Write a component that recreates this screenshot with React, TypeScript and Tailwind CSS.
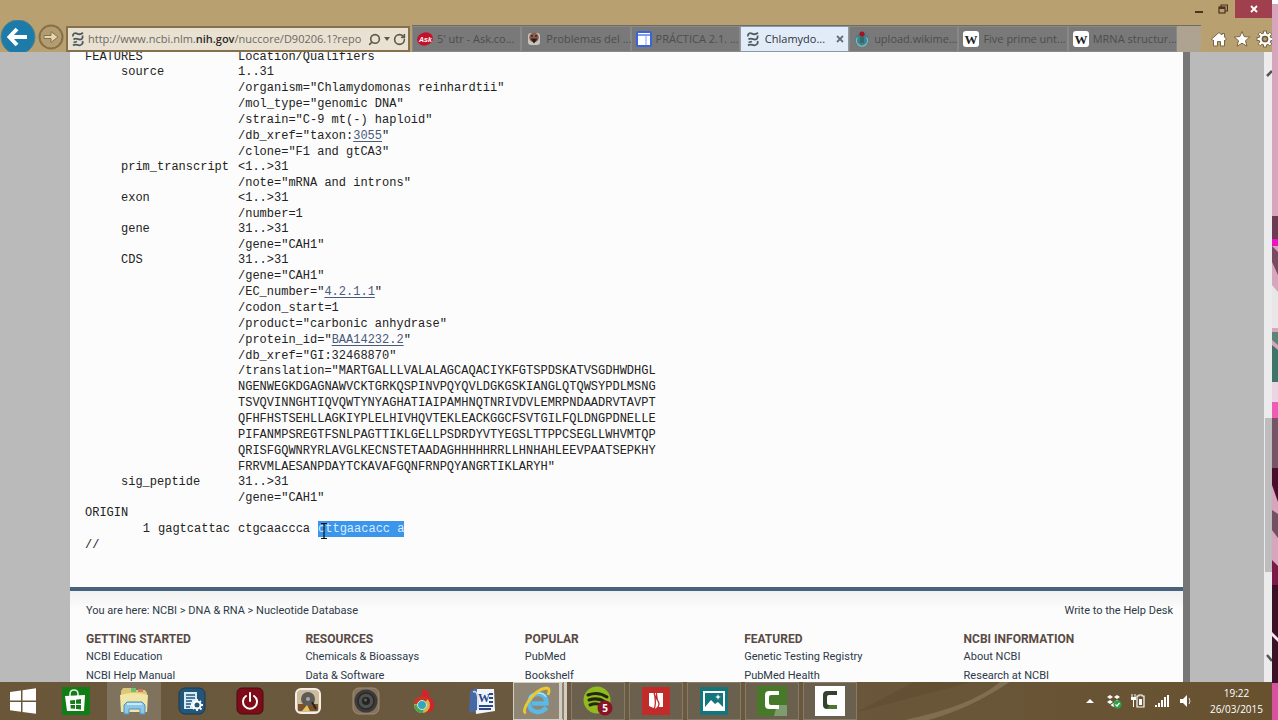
import { useState } from 'react';
import type { ReactNode } from 'react';
import { RotateCw, Search } from 'lucide-react';

interface Tab {
  id: number;
  title: string;
  icon: ReactNode;
  active?: boolean;
}

interface Feature {
  name: string;
  location: string;
  qualifiers: ReactNode[];
}

const PAGE_URL = 'http://www.ncbi.nlm.nih.gov/nuccore/D90206.1?report=genbank';

/* ---------- Icons ---------- */

function NcbiIcon() {
  return (
    <svg viewBox="0 0 16 16" className="size-4 shrink-0" fill="none" stroke="#4f5a5e" strokeWidth="1.8">
      <path d="M3 5.5C2.5 2.5 5 1.5 7 2.6S10.500 3.800 13 1.800" />
      <path d="M3.500 8.500C6 6.500 8 8.600 10 8.500S13 7 12.500 4.500" />
      <path d="M3 14.500C5.500 12.500 7.500 14.500 9.500 14.300S13.500 12.500 12.500 10" />
      <path d="M3.500 11.500L7 10.500" />
    </svg>
  );
}

function AskIcon() {
  return (
    <svg viewBox="0 0 16 16" className="size-4 shrink-0">
      <ellipse cx="8" cy="8" rx="8" ry="6.500" fill="#c3112d" transform="rotate(-15 8 8)" />
      <text x="2" y="11" fontSize="7" fontWeight="bold" fontStyle="italic" fill="#fff" fontFamily="Liberation Sans, sans-serif">Ask</text>
    </svg>
  );
}

function FaceIcon() {
  return (
    <svg viewBox="0 0 16 16" className="size-4 shrink-0">
      <rect x="2" y="2" width="12" height="12" rx="3" fill="#c9c4bf" />
      <circle cx="8" cy="6.500" r="4.800" fill="#8a5e4e" />
      <path d="M4.500 7.500L8 12.500L11.500 7.500Z" fill="#2d1d1a" />
      <circle cx="6" cy="5" r="1" fill="#3b2420" />
      <circle cx="10" cy="5" r="1" fill="#3b2420" />
    </svg>
  );
}

function SitesIcon() {
  return (
    <svg viewBox="0 0 16 16" className="size-4 shrink-0">
      <rect x="1" y="1" width="14" height="14" rx="1" fill="#fff" stroke="#3d64d6" strokeWidth="2" />
      <path d="M2 4h12" stroke="#7f9df0" strokeWidth="2" />
      <path d="M10 5v9" stroke="#7f9df0" strokeWidth="1" />
    </svg>
  );
}

function CommonsIcon() {
  return (
    <svg viewBox="0 0 16 16" className="size-4 shrink-0">
      <circle cx="8" cy="9" r="7" fill="#3f8293" />
      <path d="M3.500 6.500a5.500 5.500 0 1 0 9 0" fill="none" stroke="#8fbdb4" strokeWidth="1.200" />
      <path d="M8 6v6" stroke="#2f6d66" strokeWidth="4" />
      <circle cx="8" cy="3" r="2.600" fill="#a01425" />
    </svg>
  );
}

function WikipediaIcon() {
  return (
    <svg viewBox="0 0 16 16" className="size-4 shrink-0">
      <rect width="16" height="16" rx="3" fill="#fff" />
      <text x="8" y="12.500" textAnchor="middle" fontSize="13" fontWeight="bold" fill="#222" fontFamily="Liberation Serif, serif">W</text>
    </svg>
  );
}

function HomeIcon() {
  return (
    <svg viewBox="0 0 18 18" className="size-[18px]">
      <path
        d="M9 2.500L1.500 9L3 10.500L3.500 10V16H7.500V11.500H10.500V16H14.500V10L15 10.500L16.500 9L14.500 7.200V3.500H12V5Z"
        fill="#fff"
        stroke="#7a6541"
      />
    </svg>
  );
}

function FavoritesIcon() {
  return (
    <svg viewBox="0 0 18 18" className="size-[18px]">
      <path d="M9 1.500L11.200 6.600L16.800 7L12.500 10.700L13.900 16.200L9 13.200L4.100 16.200L5.500 10.700L1.200 7L6.800 6.600Z" fill="#fff" stroke="#7a6541" />
    </svg>
  );
}

function GearIcon() {
  return (
    <svg viewBox="0 0 18 18" className="size-[18px]">
      <path
        d="M7.500 1h3v2.300l1.600.7l1.700-1.700l2 2l-1.700 1.700l.7 1.600h2.200v3h-2.200l-.7 1.600l1.700 1.700l-2 2l-1.700-1.700l-1.600.7V17h-3v-2.200l-1.600-.7l-1.700 1.700l-2-2l1.700-1.700l-.7-1.600H1v-3h2.200l.7-1.600l-1.700-1.700l2-2l1.700 1.700l1.600-.7Z"
        fill="#fff"
        stroke="#7a6541"
      />
      <circle cx="9" cy="9" r="2.600" fill="#b8a070" stroke="#6b5838" strokeWidth="1.500" />
    </svg>
  );
}

function WindowsLogo() {
  return (
    <svg viewBox="0 0 26 26" className="size-[26px]" fill="#fff">
      <path d="M0 4L11 2.500V12.500H0Z M12.500 2.300L26 0.300V12.500H12.500Z M0 14H11V23.800L0 22.300Z M12.500 14H26V25.700L12.500 24Z" />
    </svg>
  );
}

function StoreIcon() {
  return (
    <svg viewBox="0 0 28 28" className="size-7">
      <rect width="28" height="28" fill="#127d16" />
      <path d="M8 10V7q0-4 4-4t4 4v2" fill="none" stroke="#dff0dc" strokeWidth="1.600" />
      <path d="M3 9L23 8L22 24H5Z" fill="#fff" />
      <path d="M8 13.500l5-.6v4H8.300Z M14 12.700l5-.6v4.700H14Z M8.500 18H13v3.800l-4.300-.3Z M14 18h5v4.600l-5-.5Z" fill="#127d16" />
    </svg>
  );
}

function ExplorerIcon() {
  return (
    <svg viewBox="0 0 30 30" className="size-[30px]">
      <path d="M2 5L4 2H12L14 4H26L28 7V26H2Z" fill="#dcc877" />
      <path d="M12 2h5v4h-5Z" fill="#6fbf73" />
      <path d="M19 3h5v3h-5Z" fill="#ce7b62" />
      <path d="M1 9Q15 5 29 9L28 26H2Z" fill="#f2e6a6" />
      <path d="M5 19L8 16H23L26 19V28H21V23H10V28H5Z" fill="#8cc7e8" stroke="#4f91bd" />
      <path d="M8 18H23" stroke="#e2f5ff" strokeWidth="1.500" />
    </svg>
  );
}

function ControlIcon() {
  return (
    <svg viewBox="0 0 28 28" className="size-7">
      <rect x="1" y="1" width="26" height="26" rx="6" fill="#235679" stroke="#123a58" />
      <path d="M6 5H19V14L15 22H6Z" fill="#d6edf7" />
      <path d="M8 8h9M8 11h9M8 14h6M8 17h5M8 20h4" stroke="#235679" strokeWidth="1.300" />
      <circle cx="19" cy="18" r="3.500" fill="#235679" stroke="#fff" strokeWidth="2" />
      <path d="M19 12v2M19 22v2M13 18h2M23 18h2M15 14l1 1M22 21l1.500 1.500M23 14l-1 1M15 22l1-1" stroke="#fff" strokeWidth="1.800" />
    </svg>
  );
}

function PowerIcon() {
  return (
    <svg viewBox="0 0 28 28" className="size-7">
      <rect x="1" y="1" width="26" height="26" rx="5" fill="#7e0b18" stroke="#4c0911" />
      <path d="M10 9a7 7 0 1 0 8 0" fill="none" stroke="#fff" strokeWidth="2" strokeLinecap="round" />
      <path d="M14 6v8" stroke="#fff" strokeWidth="2" strokeLinecap="round" />
    </svg>
  );
}

function DiskIcon() {
  return (
    <svg viewBox="0 0 28 28" className="size-7">
      <rect x="2" y="2" width="24" height="24" rx="5" fill="#cdbb9b" stroke="#f5ede7" strokeWidth="2" />
      <path d="M4 17h20v6q0 1-1 1H5q-1 0-1-1Z" fill="#7b512d" />
      <circle cx="14" cy="12" r="7" fill="#5c5b55" />
      <circle cx="14" cy="12" r="2" fill="#aaa69d" />
      <path d="M13 18L8 24H16Z" fill="#e4c65e" />
      <path d="M18 15l4 7" stroke="#2c211a" strokeWidth="2" />
    </svg>
  );
}

function SpeakerIcon() {
  return (
    <svg viewBox="0 0 28 28" className="size-7">
      <rect x="1" y="1" width="26" height="26" rx="6" fill="#83735f" stroke="#a48c72" />
      <circle cx="14" cy="14" r="11.500" fill="#3c3b3a" />
      <circle cx="14" cy="14" r="8" fill="#50504e" stroke="#292928" strokeWidth="1.500" />
      <circle cx="14" cy="14" r="4" fill="#242423" />
      <circle cx="13.500" cy="13" r="1.500" fill="#62625f" />
    </svg>
  );
}

function DragonIcon() {
  return (
    <svg viewBox="0 0 28 28" className="size-7">
      <path d="M12 1Q15 5 19 4Q20 8 18 9Q25 13 24 20Q22 27 14 25L8 12Q14 7 12 1Z" fill="#d3242c" />
      <circle cx="12" cy="18" r="8" fill="#d6b545" />
      <path d="M4 17a8 8 0 0 1 14-5l-6 6Z" fill="#c93425" />
      <path d="M4 18a8 8 0 0 0 9 8l1-7Z" fill="#49a451" />
      <circle cx="12" cy="18" r="4.500" fill="#31a6bc" stroke="#c9e8e2" />
    </svg>
  );
}

function WordIcon() {
  return (
    <svg viewBox="0 0 28 28" className="size-7">
      <path d="M6 2H26L27 24L8 27Z" fill="#f1f5fb" />
      <path d="M2 4L9 1V23L1 26Z" fill="#4669a6" />
      <path d="M5 5Q11 2 10 22" fill="none" stroke="#cfdef2" strokeWidth="1.500" />
      <text x="10" y="15" fontSize="12" fontWeight="bold" fill="#294a87" fontFamily="Liberation Serif, serif">W</text>
      <path d="M21 7h4M21 11h4M21 15h4M11 19h14M11 22h12" stroke="#294a87" strokeWidth="1.800" />
    </svg>
  );
}

function IeIcon() {
  return (
    <svg viewBox="0 0 30 30" className="size-[30px]" fill="none">
      <path d="M24.500 21.500Q21 26 15.500 26Q7 25 7 17Q8 8 16 8Q24.500 8 24.500 17.500H10" stroke="#5ab9e6" strokeWidth="4.500" />
      <path d="M7 13Q10 7 16 7Q22 7 24 11" stroke="#a9e1f7" strokeWidth="1.500" />
      <path d="M4 27Q0 26 6 16Q15 3 24 2Q29 2 26 9" stroke="#ecc82e" strokeWidth="2.800" />
    </svg>
  );
}

function SpotifyIcon() {
  return (
    <svg viewBox="0 0 30 30" className="size-[30px]" fill="none">
      <circle cx="14" cy="14" r="13.500" fill="#8fbb1f" />
      <path d="M5 9Q15 5 24 11M6 14Q15 11 22 16M7 19Q14 16 20 20" stroke="#24280f" strokeWidth="3" strokeLinecap="round" />
      <circle cx="22" cy="22" r="7.500" fill="#8a1427" />
      <text x="22" y="25.500" textAnchor="middle" fontSize="10" fontWeight="bold" fill="#fff" fontFamily="Open Sans, sans-serif">5</text>
    </svg>
  );
}

function ReaderIcon() {
  return (
    <svg viewBox="0 0 28 28" className="size-7">
      <rect width="28" height="28" fill="#c12b2a" />
      <path d="M7 6h7v16l-7-3Z" fill="#fff" />
      <path d="M15 6h6v14h-4Z" fill="#fff" />
      <path d="M12 5c1 7 5 8 5 12c0 3-3 5-5 6c2-5 2-10 0-18Z" fill="#fff" stroke="#c12b2a" strokeWidth="1.300" />
    </svg>
  );
}

function PicturesIcon() {
  return (
    <svg viewBox="0 0 28 28" className="size-7">
      <rect width="28" height="28" fill="#14767c" />
      <rect x="4" y="5" width="20" height="18" fill="none" stroke="#fff" strokeWidth="2" />
      <path d="M5 20L11 13L15 17L18 15L23 20V22H5Z" fill="#fff" />
      <path d="M18 7l.8 2.200L21 10l-2.200.8L18 13l-.8-2.200L15 10l2.200-.8Z" fill="#fff" />
    </svg>
  );
}

function CamtasiaIcon({ light = false }: { light?: boolean }) {
  return (
    <svg viewBox="0 0 30 30" className="size-[30px]">
      <rect width="30" height="30" fill={light ? '#fff' : '#477a28'} />
      {!light && <path d="M20 19h10v11H17Z" fill="#7d9c70" />}
      <path
        d="M22 5H12Q8 5 8 9V19Q8 23 12 23H22V19H14Q12 19 12 17V11Q12 9 14 9H22Z"
        fill={light ? '#35432c' : '#fff'}
      />
      {light && <path d="M12 23H22V19H15Z" fill="#4c7730" />}
    </svg>
  );
}

/* ---------- Data ---------- */

const tabs: Tab[] = [
  { id: 1, title: "5' utr - Ask.co...", icon: <AskIcon /> },
  { id: 2, title: 'Problemas del ...', icon: <FaceIcon /> },
  { id: 3, title: 'PRÁCTICA 2.1. ...', icon: <SitesIcon /> },
  { id: 4, title: 'Chlamydo...', icon: <NcbiIcon />, active: true },
  { id: 5, title: 'upload.wikime...', icon: <CommonsIcon /> },
  { id: 6, title: 'Five prime unt...', icon: <WikipediaIcon /> },
  { id: 7, title: 'MRNA structur...', icon: <WikipediaIcon /> },
];

function RecordLink({ children }: { children: string }) {
  return (
    <a href="#" className="text-[#4a5a7c] underline underline-offset-2">
      {children}
    </a>
  );
}

const features: Feature[] = [
  {
    name: 'source',
    location: '1..31',
    qualifiers: [
      '/organism="Chlamydomonas reinhardtii"',
      '/mol_type="genomic DNA"',
      '/strain="C-9 mt(-) haploid"',
      <>/db_xref="taxon:<RecordLink>3055</RecordLink>"</>,
      '/clone="F1 and gtCA3"',
    ],
  },
  { name: 'prim_transcript', location: '<1..>31', qualifiers: ['/note="mRNA and introns"'] },
  { name: 'exon', location: '<1..>31', qualifiers: ['/number=1'] },
  { name: 'gene', location: '31..>31', qualifiers: ['/gene="CAH1"'] },
  {
    name: 'CDS',
    location: '31..>31',
    qualifiers: [
      '/gene="CAH1"',
      <>/EC_number="<RecordLink>4.2.1.1</RecordLink>"</>,
      '/codon_start=1',
      '/product="carbonic anhydrase"',
      <>/protein_id="<RecordLink>BAA14232.2</RecordLink>"</>,
      '/db_xref="GI:32468870"',
      <div className="-mt-px">
        {`/translation="MARTGALLLVALALAGCAQACIYKFGTSPDSKATVSGDHWDHGL
NGENWEGKDGAGNAWVCKTGRKQSPINVPQYQVLDGKGSKIANGLQTQWSYPDLMSNG
TSVQVINNGHTIQVQWTYNYAGHATIAIPAMHNQTNRIVDVLEMRPNDAADRVTAVPT
QFHFHSTSEHLLAGKIYPLELHIVHQVTEKLEACKGGCFSVTGILFQLDNGPDNELLE
PIFANMPSREGTFSNLPAGTTIKLGELLPSDRDYVTYEGSLTTPPCSEGLLWHVMTQP
QRISFGQWNRYRLAVGLKECNSTETAADAGHHHHHRRLLHNHAHLEEVPAATSEPKHY
FRRVMLAESANPDAYTCKAVAFGQNFRNPQYANGRTIKLARYH"`}
      </div>,
    ],
  },
  { name: 'sig_peptide', location: '31..>31', qualifiers: ['/gene="CAH1"'] },
];

const footerColumns = [
  { title: 'GETTING STARTED', links: ['NCBI Education', 'NCBI Help Manual'] },
  { title: 'RESOURCES', links: ['Chemicals & Bioassays', 'Data & Software'] },
  { title: 'POPULAR', links: ['PubMed', 'Bookshelf'] },
  { title: 'FEATURED', links: ['Genetic Testing Registry', 'PubMed Health'] },
  { title: 'NCBI INFORMATION', links: ['About NCBI', 'Research at NCBI'] },
];

const pinned = [
  { label: 'Store', icon: <StoreIcon />, style: '' },
  { label: 'File Explorer', icon: <ExplorerIcon />, style: 'bg-[#80735e]' },
  { label: 'Control Center', icon: <ControlIcon />, style: '' },
  { label: 'Power', icon: <PowerIcon />, style: '' },
  { label: 'Disk Utility', icon: <DiskIcon />, style: '' },
  { label: 'Speakers', icon: <SpeakerIcon />, style: '' },
  { label: 'Dragon', icon: <DragonIcon />, style: '' },
  { label: 'Word', icon: <WordIcon />, style: '' },
  { label: 'Internet Explorer', icon: <IeIcon />, style: 'border border-r-8 border-double border-[#d3cdc2] bg-[#8f8675]' },
  { label: 'Spotify', icon: <SpotifyIcon />, style: 'border border-[#857b69] bg-[#6b604d]' },
  { label: 'Reader', icon: <ReaderIcon />, style: 'border border-[#857b69] bg-[#6b604d]' },
  { label: 'Pictures', icon: <PicturesIcon />, style: 'border border-[#857b69] bg-[#6b604d]' },
  { label: 'Camtasia Studio', icon: <CamtasiaIcon />, style: 'border border-[#857b69] bg-[#6b604d]' },
  { label: 'Camtasia Recorder', icon: <CamtasiaIcon light />, style: 'border border-[#857b69] bg-[#6b604d]' },
];

/* ---------- Browser chrome ---------- */

function TitleBar() {
  return (
    <div className="flex h-[25px] items-start justify-end">
      <button aria-label="Minimize" className="flex h-[18px] w-6 items-center justify-center">
        <svg viewBox="0 0 10 10" className="size-[10px]"><path d="M1 7h8v2H1Z" fill="#4b3520" /></svg>
      </button>
      <button aria-label="Restore" className="flex h-[18px] w-6 items-center justify-center">
        <svg viewBox="0 0 10 10" className="size-[10px]" fill="none" stroke="#4b3520" strokeWidth="1.200">
          <path d="M3 3V1H9.400V7H7" />
          <rect x="1" y="3" width="6" height="6" />
          <path d="M1 4h6" strokeWidth="2" />
        </svg>
      </button>
      <button aria-label="Close" className="flex h-[18px] w-[37px] items-center justify-center bg-[#a0404f]">
        <svg viewBox="0 0 10 10" className="size-[10px]"><path d="M2 2l6 6M8 2l-6 6" stroke="#fff" strokeWidth="1.800" /></svg>
      </button>
    </div>
  );
}

function AddressBar() {
  const [url, setUrl] = useState(PAGE_URL);
  const [focused, setFocused] = useState(false);

  return (
    <div className="flex h-[26px] w-[344px] shrink-0 items-center border-2 border-[#85714f] bg-[#e9e2d3] px-0.5">
      <NcbiIcon />
      <div className="relative ml-0.5 h-full flex-1">
        <input
          aria-label="Address"
          className="h-full w-full bg-transparent text-[11px] text-[#444] outline-none"
          value={focused ? url : ''}
          onChange={e => setUrl(e.target.value)}
          onFocus={() => setFocused(true)}
          onBlur={() => setFocused(false)}
        />
        {/* The domain is only highlighted while the field is not being edited */}
        {!focused && (
          <span className="pointer-events-none absolute inset-0 flex items-center text-[11px] whitespace-nowrap text-[#6d685f]">
            http://www.ncbi.nlm.<b className="font-semibold text-[#2c2a27]">nih.gov</b>/nuccore/D90206.1?repo
          </span>
        )}
      </div>
      <button aria-label="Search"><Search className="size-[13px] -scale-x-100 text-[#5f584c]" strokeWidth={3} /></button>
      <button aria-label="Show suggestions" className="px-0.5">
        <svg viewBox="0 0 8 8" className="size-2"><path d="M1 2h6L4 6Z" fill="#5f584c" /></svg>
      </button>
      <button aria-label="Refresh"><RotateCw className="size-[13px] text-[#5f584c]" strokeWidth={3} /></button>
    </div>
  );
}

function Toolbar() {
  return (
    <div className="flex h-[27px] items-end">
      <div className="flex w-[66px] shrink-0 items-center">
        <button aria-label="Back">
          <svg viewBox="0 0 36 32" className="h-8 w-9">
            <circle cx="18" cy="17" r="17" fill="#1c7ba9" stroke="#57828b" />
            <path d="M27 17H10M17 9L9.500 17L17 25" fill="none" stroke="#fff" strokeWidth="4" />
          </svg>
        </button>
        <button aria-label="Forward">
          <svg viewBox="0 0 28 28" className="size-7">
            <circle cx="15" cy="15" r="11.500" fill="#b39d70" stroke="#857048" strokeWidth="2" />
            <path d="M8 13.500h7V9.500l7 5.500l-7 5.500v-4H8Z" fill="#e3d5b5" stroke="#857048" />
          </svg>
        </button>
      </div>
      <AddressBar />
      <div role="tablist" className="ml-0.5 flex h-[27px] min-w-0 flex-1 border-t border-[#6f6b64] bg-[#777]">
        {tabs.map(tab => (
          <div
            key={tab.id}
            className={`flex min-w-0 flex-1 items-center border ${
              tab.active ? 'border-[#8e98a2] bg-[#e2ecf8]' : 'border-[#888] bg-[#797979]'
            }`}
          >
            <button
              role="tab"
              aria-selected={!!tab.active}
              className={`flex min-w-0 flex-1 items-center gap-1 pl-1 text-[11px] whitespace-nowrap ${
                tab.active ? 'text-[#303438]' : 'text-[#4d4d4d]'
              }`}
            >
              {tab.icon}
              <span>{tab.title}</span>
            </button>
            {tab.active && (
              <button aria-label="Close tab" className="px-1">
                <svg viewBox="0 0 8 8" className="size-2"><path d="M1 1l6 6M7 1L1 7" stroke="#6a6f75" strokeWidth="1.800" /></svg>
              </button>
            )}
          </div>
        ))}
        <button aria-label="New tab" className="w-6 shrink-0 bg-[#aea290]" />
      </div>
      <div className="flex h-[27px] w-[71px] shrink-0 items-center justify-between overflow-hidden pl-[9px]">
        <button aria-label="Home"><HomeIcon /></button>
        <button aria-label="Favorites"><FavoritesIcon /></button>
        <button aria-label="Tools" className="-mr-0.5"><GearIcon /></button>
      </div>
    </div>
  );
}

/* ---------- Page ---------- */

function GenBankRecord() {
  return (
    <div className="-mt-[3px] pb-[34px] pl-[15px] font-['Liberation_Mono',monospace] text-xs leading-4 whitespace-pre text-[#222]">
      <div className="grid grid-cols-[153px_1fr]">
        <span>FEATURES</span>
        <span>Location/Qualifiers</span>
      </div>
      {features.map(feature => (
        <div key={feature.name} className="-mt-px grid grid-cols-[153px_1fr]">
          <span className="pl-9">{feature.name}</span>
          <div>
            <div>{feature.location}</div>
            {feature.qualifiers.map((qualifier, i) => (
              <div key={i}>{qualifier}</div>
            ))}
          </div>
        </div>
      ))}
      <div className="-mt-px">ORIGIN</div>
      <div className="flex gap-2">
        <span className="w-[65px] text-right">1</span>
        <span>gagtcattac</span>
        <span>ctgcaaccca</span>
        <span className="relative bg-[#3b95ea] text-[#d8ecff]">
          cttgaacacc a
          <svg viewBox="0 0 8 16" className="absolute top-0.5 left-0.5 h-4 w-2" fill="none" stroke="#111">
            <path d="M1 .5h2.500l.5 1l.5-1H7M4 1v14M1 15.500h2.500l.5-1l.5 1H7" strokeWidth="1.200" />
          </svg>
        </span>
      </div>
      <div>//</div>
    </div>
  );
}

function SiteFooter() {
  return (
    <footer className="border-t-4 border-[#48617c] bg-gradient-to-b from-[#f1f1f1] to-[#fcfcfc] to-20% pl-4 font-['Roboto',sans-serif] text-[11px] text-[#2c3948]">
      <div className="flex items-center justify-between pt-3 pr-[10px] leading-4">
        <nav>
          You are here: <a href="#">NCBI</a> &gt; <a href="#">DNA &amp; RNA</a> &gt; <a href="#">Nucleotide Database</a>
        </nav>
        <a href="#">Write to the Help Desk</a>
      </div>
      <div className="grid grid-cols-5 pt-3">
        {footerColumns.map(column => (
          <div key={column.title}>
            <h3 className="text-xs leading-4 font-bold text-[#5a4a44]">{column.title}</h3>
            {column.links.map(link => (
              <a key={link} href="#" className="block leading-[19px]">
                {link}
              </a>
            ))}
          </div>
        ))}
      </div>
    </footer>
  );
}

function ScrollBar() {
  return (
    <div className="flex w-2 shrink-0 flex-col bg-[#ececec]">
      <svg viewBox="0 0 8 28" className="h-7 w-2"><path d="M3 24L8 19" stroke="#555" strokeWidth="2.500" /></svg>
      <div className="grow-[338]" />
      <div className="ml-px grow-[154] bg-[#bdbdbd]" />
      <div className="grow-[82]" />
      <svg viewBox="0 0 8 28" className="h-7 w-2"><path d="M3 1L8 7" stroke="#555" strokeWidth="2.500" /></svg>
    </div>
  );
}

function Taskbar() {
  return (
    <div className="flex h-[38px] shrink-0 bg-linear-to-r from-[#6a573a] via-[#6b5a41] to-[#67512f]">
      <button aria-label="Start" className="flex w-[46px] items-center justify-center">
        <WindowsLogo />
      </button>
      <div className="flex gap-1 pl-[3px]">
        {pinned.map(app => (
          <button key={app.label} aria-label={app.label} className={`flex w-[54px] items-center justify-center ${app.style}`}>
            {app.icon}
          </button>
        ))}
      </div>
      <svg viewBox="0 0 240 38" preserveAspectRatio="none" className="h-full min-w-0 flex-1">
        <path d="M50 38Q120 24 150 0H160Q120 26 75 38Z" fill="#8b785a" opacity=".7" />
        <path d="M0 30L120 0H60Z" fill="#5e4a2d" opacity=".5" />
      </svg>
      <div className="flex items-center gap-2 pr-[9px] text-[10px] leading-4 text-white">
        <svg viewBox="0 0 8 8" className="size-2"><path d="M0 6L4 2L8 6Z" fill="#fff" /></svg>
        <svg viewBox="0 0 16 16" className="ml-1 size-4">
          <path d="M4 2l3 2-3 2-3-2ZM11 2l3 2-3 2-3-2ZM4 7l3 2-3 2-3-2ZM11 7l3 2-3 2-3-2ZM7.500 10l3 2-3 2-3-2Z" fill="#fff" />
          <circle cx="11.500" cy="11.500" r="4" fill="#27a246" />
          <path d="M9.500 11.500l1.500 1.500l2.500-3" fill="none" stroke="#fff" strokeWidth="1.200" />
        </svg>
        <svg viewBox="0 0 16 16" className="size-4">
          <path d="M2 1v3M5 1v3" stroke="#fff" />
          <path d="M1 4h5v3H4v7H3V7H1Z" fill="#fff" />
          <path d="M7 3h2V2h3v1h2v11H7Z" fill="none" stroke="#fff" strokeWidth="1.200" />
          <path d="M9 6h3v6H9Z" fill="#fff" />
        </svg>
        <svg viewBox="0 0 16 16" className="size-4" fill="#fff">
          <path d="M1 12h2v2H1ZM4 10h2v4H4ZM7 7h2v7H7ZM10 4h2v10h-2ZM13 2h2v12h-2Z" />
        </svg>
        <svg viewBox="0 0 16 16" className="size-4">
          <path d="M2 6h3l4-4v12L5 10H2Z" fill="#fff" />
          <path d="M11 5q2 3 0 6" fill="none" stroke="#ddd" />
        </svg>
        <div className="ml-2 text-center">
          <div>19:22</div>
          <div>26/03/2015</div>
        </div>
      </div>
    </div>
  );
}

function Wallpaper() {
  return (
    <svg viewBox="0 0 6 720" preserveAspectRatio="none" className="h-full w-[6px] shrink-0">
      <rect width="6" height="720" fill="#d7a5bd" />
      <rect width="6" height="4" fill="#fff" />
      <rect y="216" width="6" height="23" fill="#6c3a52" />
      <rect y="239" width="6" height="7" fill="#ee12c0" />
      <path d="M0 246L6 252V275L0 262Z" fill="#7a4a62" />
      <path d="M0 285L6 292V328H0Z" fill="#e9e6e8" />
      <path d="M0 332H6V345L0 340Z" fill="#5b8577" />
      <path d="M0 345L6 350V382H0Z" fill="#3f7568" />
      <rect y="382" width="6" height="20" fill="#ecd4e2" />
      <rect y="402" width="6" height="16" fill="#f05bb4" />
      <rect y="418" width="6" height="50" fill="#765566" />
      <path d="M0 468H6V502L0 485Z" fill="#4a0d2c" />
      <path d="M0 510L6 514V538L0 530Z" fill="#735062" />
      <path d="M0 560L6 566V590H0Z" fill="#7b1a48" />
      <rect y="585" width="6" height="100" fill="#3c1128" />
      <path d="M0 632L6 638V642L0 636Z" fill="#f5e7ee" />
      <rect y="683" width="6" height="37" fill="#d9529f" />
    </svg>
  );
}

export default function App() {
  return (
    <div className="flex h-screen overflow-hidden font-['Open_Sans',sans-serif]">
      <div className="flex min-w-0 flex-1 flex-col">
        <header className="shrink-0 bg-[#b8a070]">
          <TitleBar />
          <Toolbar />
        </header>
        <div className="flex min-h-0 flex-1 bg-[#bababa]">
          <main className="mr-[74px] ml-[70px] min-w-0 flex-1 overflow-hidden border-r-[7px] border-[#777] bg-[#fcfcfc]">
            <GenBankRecord />
            <SiteFooter />
          </main>
          <ScrollBar />
        </div>
        <Taskbar />
      </div>
      <Wallpaper />
    </div>
  );
}
